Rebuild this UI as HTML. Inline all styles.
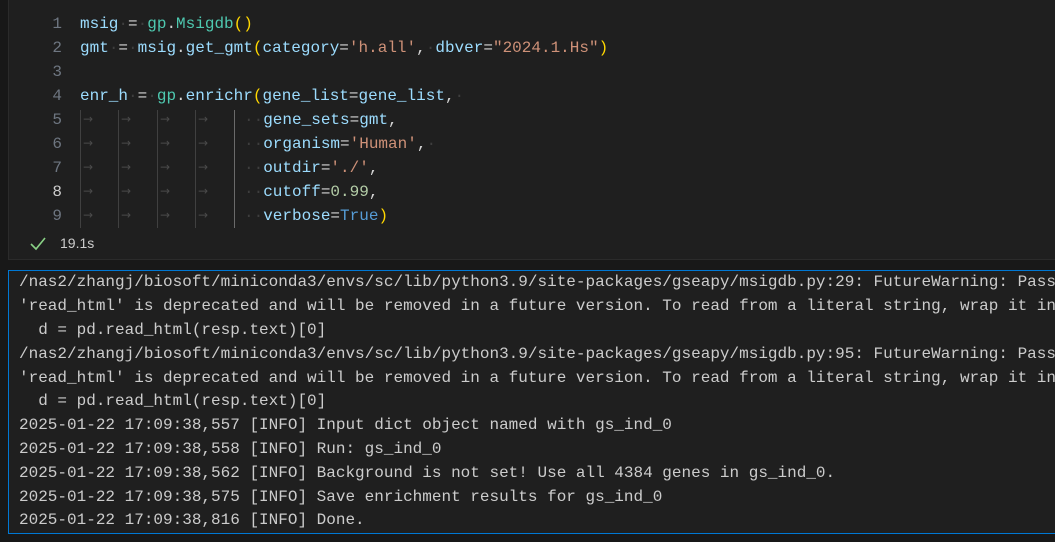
<!DOCTYPE html>
<html><head><meta charset="utf-8"><style>
body{margin:0;width:1055px;height:542px;background:#181818;overflow:hidden;position:relative;font-family:"Liberation Mono",monospace}
.cell{position:absolute;left:8px;top:-2px;width:1060px;height:260px;background:#1f1f1f;border:1px solid #2b2b2b}
.out{position:absolute;left:8px;top:270px;width:1060px;height:262px;border:1px solid #0078d4;background:#1f1f1f}
.l{position:absolute;left:80px;font-size:16px;white-space:pre;color:#9cdcfe;height:24px;line-height:24px}
.n{position:absolute;width:62px;left:0;text-align:right;font-size:16px;color:#6e7681;line-height:24px}
.o{position:absolute;left:19px;font-size:16px;white-space:pre;color:#cccccc;line-height:24px}
.t{color:#4ec9b0}.p{color:#ffd700}.s{color:#ce9178}.w{color:#d4d4d4}.k{color:#569cd6}.num{color:#b5cea8}.d{color:#3e3e3e}
.g{position:absolute;width:1px;background:#404040}
.a{position:absolute;color:#4a4a4a;font-size:12px;font-family:"DejaVu Sans",sans-serif}
</style></head><body>
<div class="cell"></div>
<div class="n" style="top:12px">1</div><div class="l" style="top:12px">msig<span class="d">·</span><span class="w">=</span><span class="d">·</span><span class="t">gp</span><span class="w">.</span><span class="t">Msigdb</span><span class="p">()</span></div>
<div class="n" style="top:36px">2</div><div class="l" style="top:36px">gmt<span class="d">·</span><span class="w">=</span><span class="d">·</span>msig<span class="w">.</span>get_gmt<span class="p">(</span>category<span class="w">=</span><span class="s">'h.all'</span><span class="w">,</span><span class="d">·</span>dbver<span class="w">=</span><span class="s">"2024.1.Hs"</span><span class="p">)</span></div>
<div class="n" style="top:60px">3</div>
<div class="n" style="top:84px">4</div><div class="l" style="top:84px">enr_h<span class="d">·</span><span class="w">=</span><span class="d">·</span><span class="t">gp</span><span class="w">.</span>enrichr<span class="p">(</span>gene_list<span class="w">=</span>gene_list<span class="w">,</span><span class="d">·</span></div>
<div class="n" style="top:108px">5</div><div class="l" style="top:108px;left:244px"><span class="d">··</span>gene_sets<span class="w">=</span>gmt<span class="w">,</span></div>
<div class="n" style="top:132px">6</div><div class="l" style="top:132px;left:244px"><span class="d">··</span>organism<span class="w">=</span><span class="s">'Human'</span><span class="w">,</span><span class="d">·</span></div>
<div class="n" style="top:156px">7</div><div class="l" style="top:156px;left:244px"><span class="d">··</span>outdir<span class="w">=</span><span class="s">'./'</span><span class="w">,</span></div>
<div class="n" style="top:180px;color:#ccc">8</div><div class="l" style="top:180px;left:244px"><span class="d">··</span>cutoff<span class="w">=</span><span class="num">0.99</span><span class="w">,</span></div>
<div class="n" style="top:204px">9</div><div class="l" style="top:204px;left:244px"><span class="d">··</span>verbose<span class="w">=</span><span class="k">True</span><span class="p">)</span></div>
<div class="g" style="left:80px;top:110px;height:118px"></div>
<div class="g" style="left:118px;top:110px;height:118px"></div>
<div class="g" style="left:157px;top:110px;height:118px"></div>
<div class="g" style="left:195px;top:110px;height:118px"></div>
<div class="g" style="left:234px;top:110px;height:118px;background:#6a6a6a"></div>
<div class="a" style="left:83px;top:107px;line-height:24px">→<br>→<br>→<br>→<br>→</div>
<div class="a" style="left:121px;top:107px;line-height:24px">→<br>→<br>→<br>→<br>→</div>
<div class="a" style="left:160px;top:107px;line-height:24px">→<br>→<br>→<br>→<br>→</div>
<div class="a" style="left:198px;top:107px;line-height:24px">→<br>→<br>→<br>→<br>→</div>
<svg style="position:absolute;left:29px;top:236px" width="18" height="16"><path d="M2 8 L7 13 L16 2" stroke="#89d185" stroke-width="1.6" fill="none"/></svg>
<div style="position:absolute;left:60px;top:235px;color:#ccc;font-size:14px;font-family:'Liberation Sans',sans-serif">19.1s</div>
<div class="out"></div>
<div class="o" style="top:270px">/nas2/zhangj/biosoft/miniconda3/envs/sc/lib/python3.9/site-packages/gseapy/msigdb.py:29: FutureWarning: Passing</div>
<div class="o" style="top:294px">'read_html' is deprecated and will be removed in a future version. To read from a literal string, wrap it in</div>
<div class="o" style="top:318px">  d = pd.read_html(resp.text)[0]</div>
<div class="o" style="top:342px">/nas2/zhangj/biosoft/miniconda3/envs/sc/lib/python3.9/site-packages/gseapy/msigdb.py:95: FutureWarning: Passing</div>
<div class="o" style="top:366px">'read_html' is deprecated and will be removed in a future version. To read from a literal string, wrap it in</div>
<div class="o" style="top:389px">  d = pd.read_html(resp.text)[0]</div>
<div class="o" style="top:413px">2025-01-22 17:09:38,557 [INFO] Input dict object named with gs_ind_0</div>
<div class="o" style="top:437px">2025-01-22 17:09:38,558 [INFO] Run: gs_ind_0</div>
<div class="o" style="top:461px">2025-01-22 17:09:38,562 [INFO] Background is not set! Use all 4384 genes in gs_ind_0.</div>
<div class="o" style="top:485px">2025-01-22 17:09:38,575 [INFO] Save enrichment results for gs_ind_0</div>
<div class="o" style="top:508px">2025-01-22 17:09:38,816 [INFO] Done.</div>
</body></html>
